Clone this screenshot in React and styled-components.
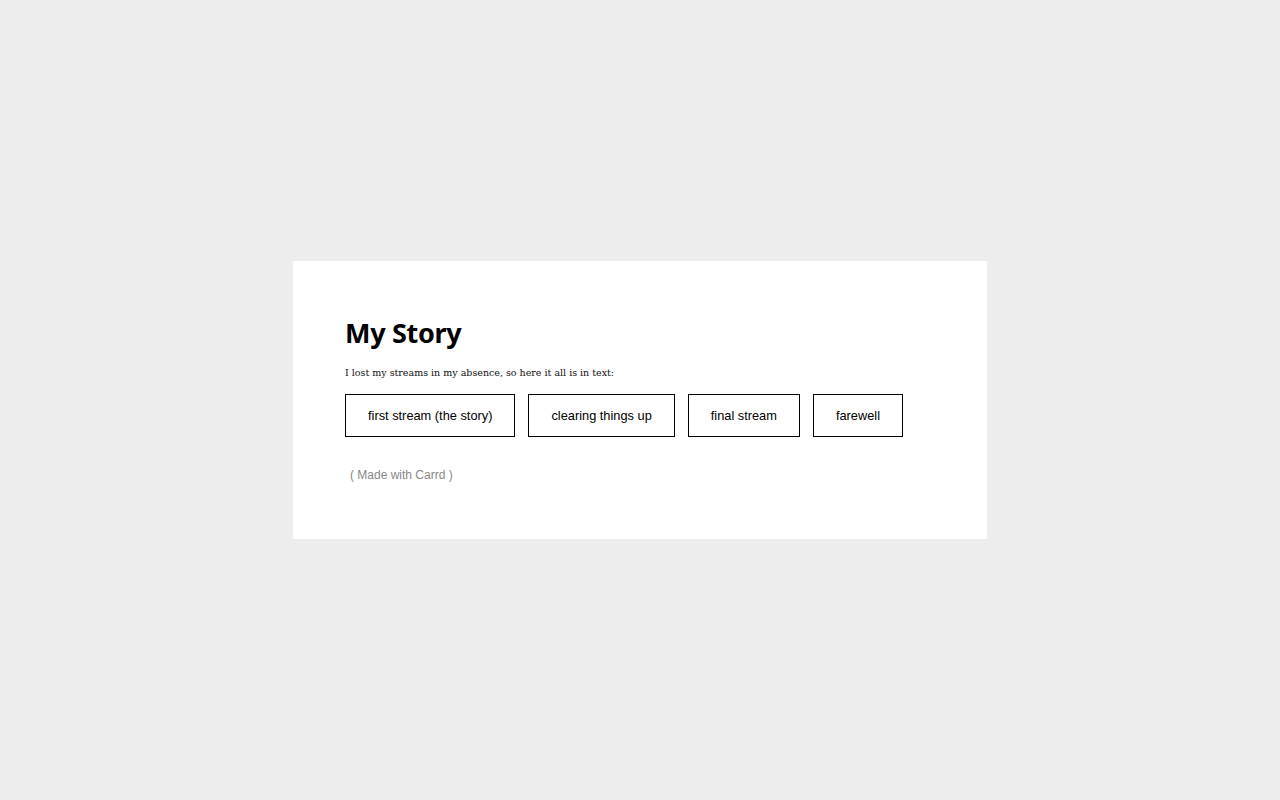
import React from 'react'
import styled, { createGlobalStyle } from 'styled-components'

const GlobalStyle = createGlobalStyle`
  html, body {
    margin: 0;
    padding: 0;
    background: #ededed;
  }
  #root {
    min-height: 100vh;
  }
`

const Page = styled.div`
  min-height: 100vh;
  display: flex;
  align-items: center;
  justify-content: center;
`

const Card = styled.main`
  width: 694px;
  box-sizing: border-box;
  background: #ffffff;
  padding: 52px 52px 57px;
`

const Title = styled.h1`
  margin: 0 0 13px;
  font-family: 'Noto Sans', 'DejaVu Sans', sans-serif;
  font-weight: 700;
  font-size: 27px;
  line-height: 40px;
  letter-spacing: -0.3px;
  color: #000;
`

const Intro = styled.p`
  margin: 0 0 14px;
  font-family: 'DejaVu Serif', 'Liberation Serif', serif;
  font-size: 9.5px;
  line-height: 14px;
  color: #111;
`

const Links = styled.nav`
  display: flex;
  gap: 13px;
  margin-bottom: 31px;
`

const LinkButton = styled.a`
  display: flex;
  align-items: center;
  justify-content: center;
  height: 43px;
  box-sizing: border-box;
  padding: 0 22px;
  border: 1px solid #000;
  font-family: 'Liberation Sans', Arial, sans-serif;
  font-size: 12.8px;
  color: #000;
  text-decoration: none;
  white-space: nowrap;
`

const Credit = styled.p`
  margin: 0;
  padding-left: 5px;
  font-family: 'Liberation Sans', Arial, sans-serif;
  font-size: 12px;
  line-height: 14px;
  color: #888;
`

const links = [
  { label: 'first stream (the story)' },
  { label: 'clearing things up' },
  { label: 'final stream' },
  { label: 'farewell' },
]

const App = () => {
  return (
    <Page>
      <GlobalStyle />
      <Card>
        <Title>My Story</Title>
        <Intro>I lost my streams in my absence, so here it all is in text:</Intro>
        <Links>
          {links.map((link) => (
            <LinkButton key={link.label} href="#">
              {link.label}
            </LinkButton>
          ))}
        </Links>
        <Credit>( Made with Carrd )</Credit>
      </Card>
    </Page>
  )
}

export default App
